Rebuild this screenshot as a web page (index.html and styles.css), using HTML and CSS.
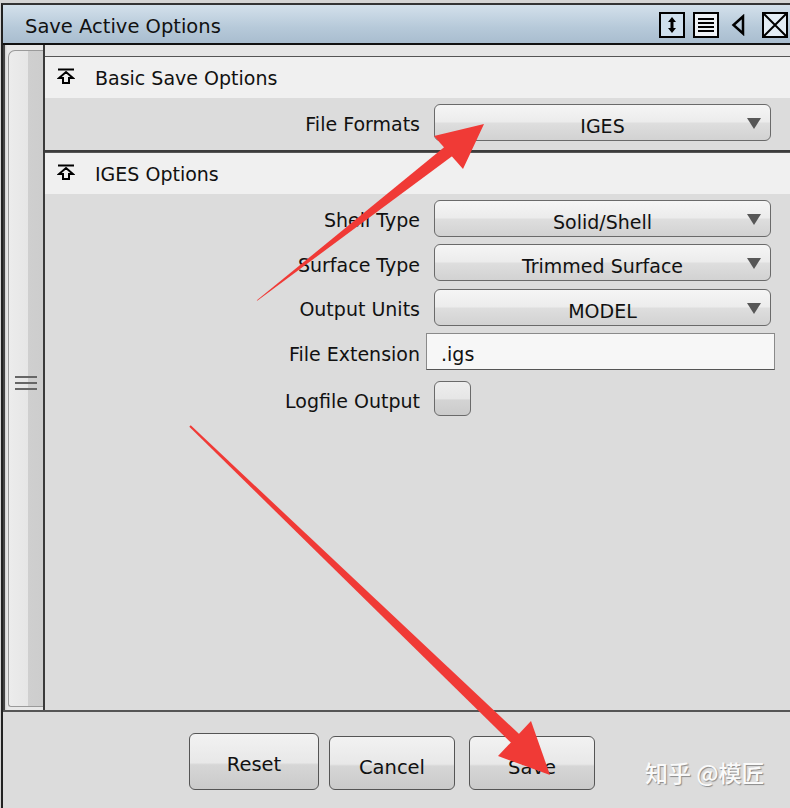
FILE: index.html
```html
<!DOCTYPE html>
<html lang="en">

<head>
    <meta charset="UTF-8">
    <meta name="viewport" content="width=device-width, initial-scale=1.0">
    <title>Save Active Options</title>
    <link rel="stylesheet" href="styles.css">
</head>

<body>
    <div class="frame">
        <div class="titlebar">
            <span class="title">Save Active Options</span>
            <div class="tools">
                <svg class="tool" width="26" height="26" viewBox="0 0 26 26">
                    <rect x="1" y="1" width="24" height="24" fill="#cfe0ee" stroke="#000" stroke-width="2"/>
                    <path d="M13 5 L17 10 L9 10 Z M13 21 L17 16 L9 16 Z" fill="#000"/>
                    <rect x="11.5" y="9" width="3" height="8" fill="#000"/>
                </svg>
                <svg class="tool menu" width="26" height="26" viewBox="0 0 26 26">
                    <rect x="1" y="1" width="24" height="24" fill="#eef2f6" stroke="#000" stroke-width="2"/>
                    <path d="M5 7 H21 M5 11 H21 M5 15 H21 M5 19 H21" stroke="#000" stroke-width="2"/>
                </svg>
                <svg class="tool back" width="14" height="22" viewBox="0 0 14 22">
                    <path d="M12 2.5 L2.5 11 L12 19.5 Z" fill="none" stroke="#000" stroke-width="2.5" stroke-linejoin="miter"/>
                </svg>
                <svg class="tool close" width="26" height="26" viewBox="0 0 26 26">
                    <rect x="1" y="1" width="24" height="24" fill="#e4eef6" stroke="#000" stroke-width="2"/>
                    <path d="M2 2 L24 24 M24 2 L2 24" stroke="#000" stroke-width="2"/>
                </svg>
            </div>
        </div>

        <div class="content">
            <div class="sidebar">
                <div class="handle">
                    <span class="grip"></span>
                </div>
            </div>

            <div class="panel">
                <div class="section-head">
                    <svg class="collapse" width="18" height="16" viewBox="0 0 18 16">
                        <path d="M1 1.5 H17" stroke="#000" stroke-width="2"/>
                        <path d="M9 4 L16 10 L12 10 L12 15 L6 15 L6 10 L2 10 Z" fill="none" stroke="#000" stroke-width="2" stroke-linejoin="miter"/>
                    </svg>
                    Basic Save Options
                </div>
                <div class="section-body first">
                    <div class="row">
                        <label class="label">File Formats</label>
                        <div class="combo">IGES<span class="caret"></span></div>
                    </div>
                </div>

                <div class="section-head">
                    <svg class="collapse" width="18" height="16" viewBox="0 0 18 16">
                        <path d="M1 1.5 H17" stroke="#000" stroke-width="2"/>
                        <path d="M9 4 L16 10 L12 10 L12 15 L6 15 L6 10 L2 10 Z" fill="none" stroke="#000" stroke-width="2" stroke-linejoin="miter"/>
                    </svg>
                    IGES Options
                </div>
                <div class="section-body">
                    <div class="row">
                        <label class="label">Shell Type</label>
                        <div class="combo">Solid/Shell<span class="caret"></span></div>
                    </div>
                    <div class="row">
                        <label class="label">Surface Type</label>
                        <div class="combo">Trimmed Surface<span class="caret"></span></div>
                    </div>
                    <div class="row">
                        <label class="label">Output Units</label>
                        <div class="combo">MODEL<span class="caret"></span></div>
                    </div>
                    <div class="row">
                        <label class="label">File Extension</label>
                        <div class="field">.igs</div>
                    </div>
                    <div class="row check-row">
                        <label class="label">Logfile Output</label>
                        <div class="check"></div>
                    </div>
                </div>
            </div>
        </div>

        <div class="footer">
            <button class="btn btn-focus">Reset</button>
            <button class="btn">Cancel</button>
            <button class="btn">Save</button>
            <span class="mark">知乎 @模匠</span>
        </div>
    </div>

    <!-- annotation arrows drawn over the dialog -->
    <svg class="arrows" width="790" height="808" viewBox="0 0 790 808">
        <polygon fill="#f03a36" points="256.6,301.2 257.8,299.6 445.3,146.3 452.7,155.7"/>
        <polygon fill="#f03a36" points="434,136 484,124 463,169"/>
        <polygon fill="#f03a36" points="189.3,426.7 190.7,425.3 519.7,734.5 511.3,743.1"/>
        <polygon fill="#f03a36" points="531,721 550,775 498,756"/>
    </svg>
</body>

</html>
```

FILE: styles.css
```css
* {
    padding: 0;
    margin: 0;
    box-sizing: border-box;
}

body {
    width: 790px;
    height: 808px;
    overflow: hidden;
    background-color: #d4d4d4;
    font-family: "DejaVu Sans", sans-serif;
    color: #111;
    position: relative;
}

.frame {
    margin-left: 1px;
    margin-top: 3px;
    border-left: 2px solid #222;
    border-top: 2px solid #333;
    height: 805px;
    background-color: #dcdcdc;
    padding-left: 2px;
}

/* title bar */
.titlebar {
    height: 40px;
    margin-left: -2px;
    border-bottom: 2px solid #111;
    background: linear-gradient(#d3e0eb, #b6c9d9 60%, #a9bdcf);
    display: flex;
    align-items: center;
    padding-left: 22px;
    padding-right: 2px;
}

.title {
    font-size: 19.5px;
    flex: 1;
    padding-top: 4px;
}

.tools {
    display: flex;
    align-items: center;
    padding-top: 2px;
}

.tool {
    display: block;
}

.menu {
    margin-left: 8px;
}

.back {
    margin-left: 12px;
}

.close {
    margin-left: 17px;
}

/* main area */
.content {
    display: flex;
    height: 667px;
    border-bottom: 2px solid #555;
    margin-left: -2px;
}

.sidebar {
    width: 40px;
    padding: 5px 0 3px 3px;
    border-left: 2px solid #444;
    background: linear-gradient(90deg, #cfcfcf 0, #e8e8e8 2px);
}

.handle {
    height: 100%;
    border: 1px solid #9a9a9a;
    border-right: none;
    border-radius: 7px 0 0 3px;
    background: linear-gradient(90deg, #ececec 0, #e6e6e6 55%, #cfcfcf 56%, #cdcdcd);
    display: flex;
    align-items: center;
    justify-content: center;
}

.grip {
    display: block;
    width: 22px;
    height: 14px;
    margin-top: 8px;
    border-top: 2px solid #666;
    border-bottom: 2px solid #666;
    position: relative;
}

.grip::after {
    content: "";
    position: absolute;
    left: 0;
    right: 0;
    top: 4px;
    border-top: 2px solid #666;
}

.panel {
    flex: 1;
    border-left: 2px solid #3a3a3a;
    padding-top: 11px;
    background-color: #e6e6e6;
    display: flex;
    flex-direction: column;
}

.section-head {
    height: 42px;
    background-color: #f0f0f0;
    border-top: 1px solid #555;
    display: flex;
    align-items: center;
    font-size: 19px;
    padding-left: 12px;
    padding-top: 1px;
}

.collapse {
    margin-right: 20px;
    margin-top: -4px;
}

.section-body {
    background-color: #dcdcdc;
    padding-top: 6px;
    flex: 1;
}

.section-body.first {
    flex: none;
    height: 54px;
    border-bottom: 2px solid #3c3c3c;
}

.row {
    display: flex;
    align-items: center;
    height: 36px;
    margin-bottom: 8.5px;
}

.label {
    width: 376px;
    text-align: right;
    font-size: 19px;
    padding-right: 1px;
    padding-top: 4px;
}

.combo {
    margin-left: 13px;
    width: 337px;
    height: 37px;
    border: 1px solid #6a6a6a;
    border-radius: 6px;
    background: linear-gradient(#f5f5f5, #ececec 48%, #dedede 52%, #d2d2d2);
    font-size: 19px;
    text-align: center;
    line-height: 37px;
    padding-top: 3px;
    position: relative;
}

.caret {
    position: absolute;
    right: 9px;
    top: 13px;
    width: 0;
    height: 0;
    border-left: 7px solid transparent;
    border-right: 7px solid transparent;
    border-top: 11px solid #575757;
}

.field {
    margin-left: 5px;
    width: 349px;
    height: 37px;
    border: 1px solid #8a8a8a;
    border-bottom-color: #555;
    background-color: #f7f7f7;
    font-size: 19px;
    line-height: 35px;
    padding-left: 14px;
    padding-top: 3px;
}

.check-row {
    margin-top: 11px;
}

.check {
    margin-left: 13px;
    width: 37px;
    height: 35px;
    border: 1px solid #6a6a6a;
    border-radius: 6px;
    background: linear-gradient(#eeeeee, #e6e6e6 50%, #d4d4d4 55%, #cbcbcb);
}

/* footer buttons */
.footer {
    height: 94px;
    display: flex;
    align-items: flex-start;
    padding-left: 186px;
    padding-top: 21px;
    margin-left: -2px;
}

.btn {
    width: 126px;
    height: 54px;
    margin-top: 3px;
    margin-right: 14px;
    border: 1px solid #555;
    border-radius: 6px;
    background: linear-gradient(#f2f2f2, #e8e8e8 52%, #d6d6d6 56%, #cacaca);
    font-family: "DejaVu Sans", sans-serif;
    font-size: 19.5px;
    color: #111;
    padding-top: 9px;
}

.btn-focus {
    width: 130px;
    height: 57px;
    margin-top: 0;
    margin-right: 10px;
    padding-top: 6px;
}

.mark {
    margin-left: 36px;
    margin-top: 22px;
    font-family: "Noto Sans CJK SC", sans-serif;
    font-size: 23px;
    font-weight: 500;
    color: #fafafa;
    text-shadow: 1px 1px 1px #8a8a8a;
}

.arrows {
    position: absolute;
    left: 0;
    top: 0;
    pointer-events: none;
}
```
